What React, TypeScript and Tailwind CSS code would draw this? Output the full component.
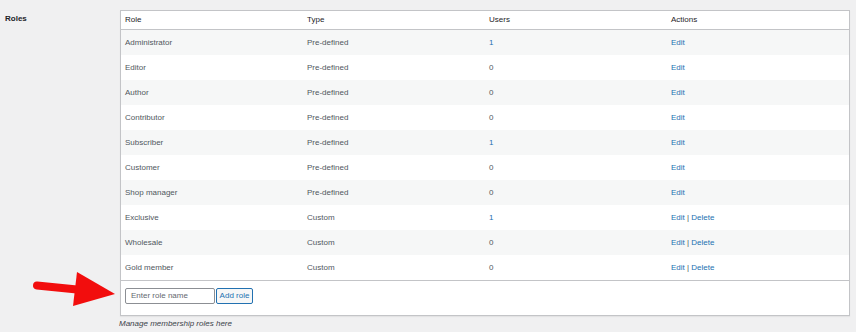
import React from "react";

type Row = { role: string; type: string; users: string; custom: boolean };

const rows: Row[] = [
  { role: "Administrator", type: "Pre-defined", users: "1", custom: false },
  { role: "Editor", type: "Pre-defined", users: "0", custom: false },
  { role: "Author", type: "Pre-defined", users: "0", custom: false },
  { role: "Contributor", type: "Pre-defined", users: "0", custom: false },
  { role: "Subscriber", type: "Pre-defined", users: "1", custom: false },
  { role: "Customer", type: "Pre-defined", users: "0", custom: false },
  { role: "Shop manager", type: "Pre-defined", users: "0", custom: false },
  { role: "Exclusive", type: "Custom", users: "1", custom: true },
  { role: "Wholesale", type: "Custom", users: "0", custom: true },
  { role: "Gold member", type: "Custom", users: "0", custom: true },
];

export default function App() {
  return (
    <div className="relative w-[856px] h-[332px] overflow-hidden bg-[#f0f0f1] flex font-['Liberation_Sans',Arial,sans-serif] text-[8px] leading-[10px]">
      <div className="w-[120px] shrink-0 pl-[5px] pt-[14px] font-bold text-[#1d2327]">Roles</div>
      <div className="flex-1 pt-[10px] pr-[6px]">
        <div className="border border-[#c3c4c7] bg-white shadow-[0_1px_1px_rgba(0,0,0,0.05)]">
          <div className="grid grid-cols-4 h-[19px] items-center border-b border-[#c3c4c7] text-[#1d2327]">
            <div className="pl-[4px]">Role</div>
            <div className="pl-[4px]">Type</div>
            <div className="pl-[4px]">Users</div>
            <div className="pl-[4px]">Actions</div>
          </div>
          {rows.map((r, i) => (
            <div
              key={r.role}
              className={`grid grid-cols-4 h-[25px] items-center text-[#50575e] ${i % 2 === 0 ? "bg-[#f6f7f7]" : "bg-white"}`}
            >
              <div className="pl-[4px]">{r.role}</div>
              <div className="pl-[4px]">{r.type}</div>
              <div className={`pl-[4px] ${r.users === "1" ? "text-[#2271b1]" : ""}`}>{r.users}</div>
              <div className="pl-[4px] text-[#2271b1]">
                Edit
                {r.custom && (
                  <>
                    <span className="text-[#50575e]"> | </span>Delete
                  </>
                )}
              </div>
            </div>
          ))}
          <div className="h-[35px] border-t border-[#c3c4c7] flex items-start pt-[7px] pl-[4px] gap-[1px]">
            <div className="w-[90px] h-[16px] border border-[#8c8f94] rounded-[2px] bg-white flex items-center pl-[5px] text-[#646970]">
              Enter role name
            </div>
            <div className="w-[37px] h-[16px] border border-[#2271b1] rounded-[2px] bg-[#f6f7f7] flex items-center justify-center text-[#2271b1]">
              Add role
            </div>
          </div>
        </div>
        <div className="mt-[3px] -ml-[1px] italic text-[#3c434a]">Manage membership roles here</div>
      </div>
      <svg className="absolute left-0 top-0" width="856" height="332" viewBox="0 0 856 332">
        <line x1="37" y1="285.5" x2="82" y2="290" stroke="#f20d0d" strokeWidth="8" strokeLinecap="round" />
        <polygon points="77,272 115,294 73,306" fill="#f20d0d" />
      </svg>
    </div>
  );
}
